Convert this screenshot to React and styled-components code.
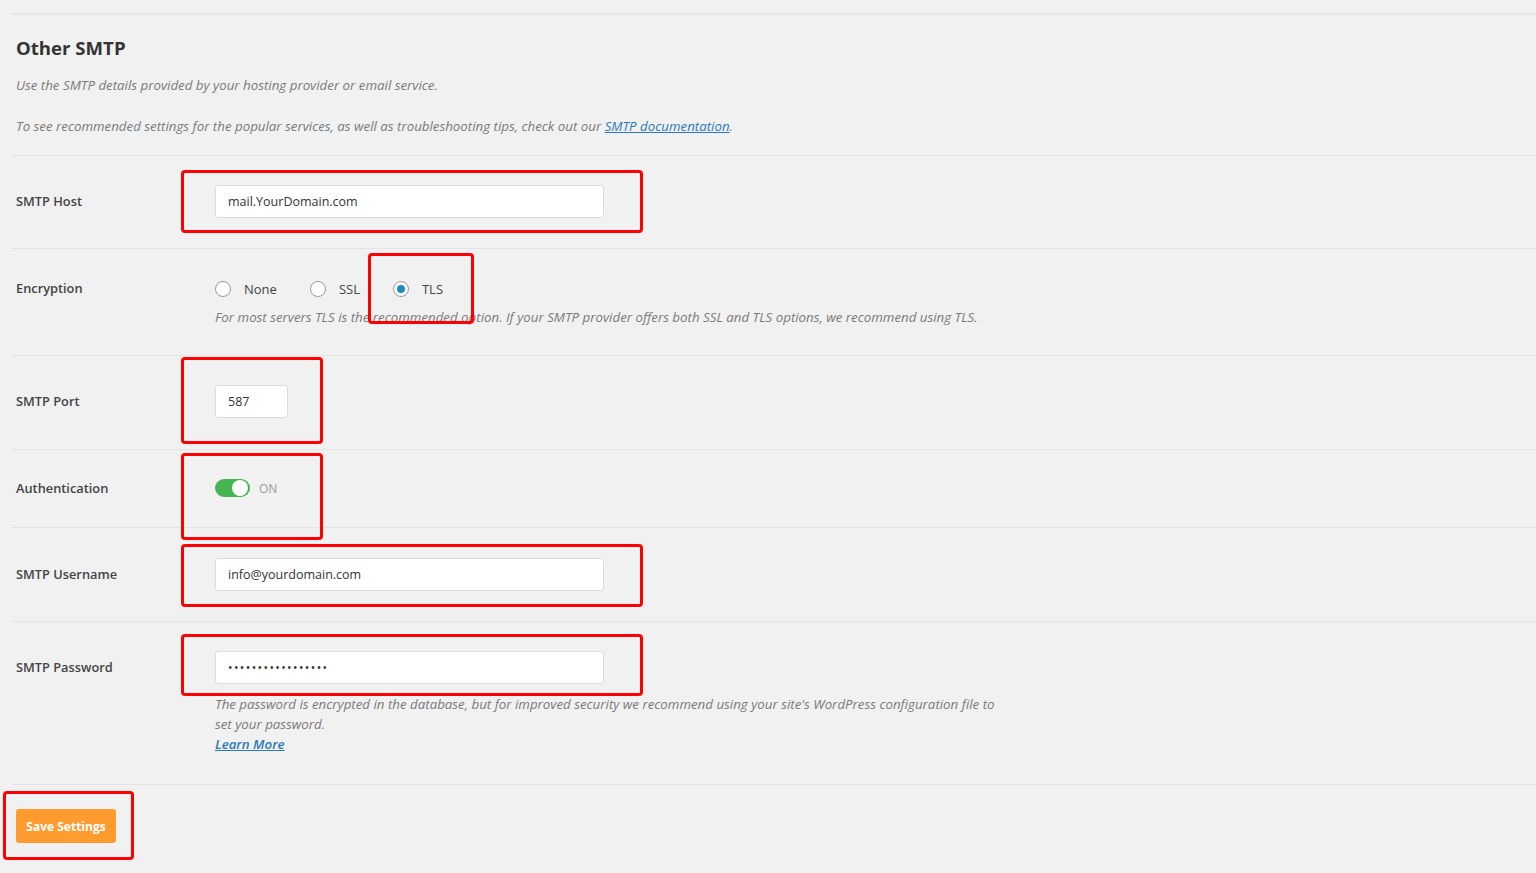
import React from "react";
import styled, { createGlobalStyle } from "styled-components";

const Global = createGlobalStyle`
  html, body { margin: 0; padding: 0; background: #f1f1f1; }
  body { font-family: "Open Sans", "Noto Sans", sans-serif; color: #444; }
  * { box-sizing: border-box; }
`;

const Page = styled.div`
  padding: 13px 0 0 12px;
  min-height: 873px;
`;

const Section = styled.section`
  border-top: 2px solid #e6e6e6;
`;

const Header = styled.div`
  padding: 21px 0 19px 4px;
  border-bottom: 1px solid #e3e3e3;
`;

const Title = styled.h2`
  margin: 0;
  font-size: 18.6px;
  line-height: 24px;
  font-weight: 700;
  color: #333;
`;

const Desc = styled.p`
  margin: ${(p) => p.$mt || 0}px 0 0;
  font-size: 13.3px;
  line-height: 20px;
  font-style: italic;
  color: #7a7a7a;
`;

const DocLink = styled.a`
  color: #2a7ab8;
  text-decoration: underline;
  font-weight: ${(p) => (p.$strong ? 600 : 400)};
`;

const Row = styled.div`
  display: grid;
  grid-template-columns: 203px 1fr;
  padding: ${(p) => p.$pt ?? 29}px 0 ${(p) => p.$pb ?? 30}px;
  border-bottom: 1px solid #e3e3e3;
`;

const Label = styled.div`
  padding-left: 4px;
  font-size: 12.8px;
  font-weight: 600;
  color: #444;
  line-height: ${(p) => p.$h}px;
`;

const Field = styled.div`
  position: relative;
`;

const TextInput = styled.input`
  display: block;
  width: ${(p) => p.$w}px;
  height: 33px;
  padding: 0 12px;
  border: 1px solid #dcdcdc;
  border-radius: 3px;
  background: #fff;
  font-family: "Open Sans", "Noto Sans", sans-serif;
  font-size: 12.5px;
  color: #333;
  outline: none;
  &[type="password"] {
    font-size: 12px;
    letter-spacing: 1.4px;
  }
`;

const RadioGroup = styled.div`
  display: flex;
  align-items: center;
  height: 22px;
`;

const RadioItem = styled.label`
  display: flex;
  align-items: center;
  gap: 13px;
  margin-right: 33px;
  font-size: 13px;
  color: #444;
`;

const RadioCircle = styled.span`
  width: 16px;
  height: 16px;
  border-radius: 50%;
  border: 1px solid #9a9a9a;
  background: #fff;
  display: flex;
  align-items: center;
  justify-content: center;
  &::after {
    content: "";
    width: 8px;
    height: 8px;
    border-radius: 50%;
    background: ${(p) => (p.$checked ? "#1e8cbe" : "transparent")};
  }
`;

const ToggleWrap = styled.div`
  display: flex;
  align-items: center;
  gap: 9px;
  height: 18px;
`;

const Track = styled.span`
  width: 35px;
  height: 18px;
  border-radius: 9px;
  background: #46b450;
  position: relative;
  &::after {
    content: "";
    position: absolute;
    top: 1px;
    right: 2px;
    width: 16px;
    height: 16px;
    border-radius: 50%;
    background: #fff;
  }
`;

const ToggleText = styled.span`
  font-size: 12px;
  color: #9a9a9a;
`;

const Footer = styled.div`
  padding: 24px 0 0 4px;
`;

const SaveButton = styled.button`
  position: relative;
  width: 100px;
  height: 34px;
  border: none;
  border-radius: 3px;
  background: #ff9b2f;
  color: #fff;
  font-family: "Open Sans", "Noto Sans", sans-serif;
  font-size: 12px;
  font-weight: 700;
  cursor: pointer;
`;

const Mark = styled.span`
  position: absolute;
  top: ${(p) => p.$top}px;
  left: ${(p) => p.$left}px;
  width: ${(p) => p.$w}px;
  height: ${(p) => p.$h}px;
  border: 3.5px solid #ff0000;
  border-radius: 4px;
  pointer-events: none;
`;

const FooterInner = styled.div`
  position: relative;
  display: inline-block;
`;

export default function App() {
  return (
    <Page>
      <Global />
      <Section>
        <Header>
          <Title>Other SMTP</Title>
          <Desc $mt={15}>Use the SMTP details provided by your hosting provider or email service.</Desc>
          <Desc $mt={21}>
            To see recommended settings for the popular services, as well as troubleshooting tips, check out our{" "}
            <DocLink href="#">SMTP documentation</DocLink>.
          </Desc>
        </Header>

        <Row>
          <Label $h={33}>SMTP Host</Label>
          <Field>
            <TextInput $w={389} readOnly value="mail.YourDomain.com" />
            <Mark $top={-15} $left={-34} $w={462} $h={63} />
          </Field>
        </Row>

        <Row $pb={28}>
          <Label $h={20}>Encryption</Label>
          <Field>
            <RadioGroup>
              <RadioItem><RadioCircle />None</RadioItem>
              <RadioItem><RadioCircle />SSL</RadioItem>
              <RadioItem><RadioCircle $checked />TLS</RadioItem>
            </RadioGroup>
            <Desc $mt={7}>
              For most servers TLS is the recommended option. If your SMTP provider offers both SSL and TLS options, we recommend using TLS.
            </Desc>
            <Mark $top={-25} $left={153} $w={106} $h={71} />
          </Field>
        </Row>

        <Row $pb={31}>
          <Label $h={33}>SMTP Port</Label>
          <Field>
            <TextInput $w={73} readOnly value="587" />
            <Mark $top={-28} $left={-34} $w={142} $h={87} />
          </Field>
        </Row>

        <Row>
          <Label $h={18}>Authentication</Label>
          <Field>
            <ToggleWrap>
              <Track />
              <ToggleText>ON</ToggleText>
            </ToggleWrap>
            <Mark $top={-26} $left={-34} $w={142} $h={87} />
          </Field>
        </Row>

        <Row $pt={30}>
          <Label $h={33}>SMTP Username</Label>
          <Field>
            <TextInput $w={389} readOnly value="info@yourdomain.com" />
            <Mark $top={-14} $left={-34} $w={462} $h={63} />
          </Field>
        </Row>

        <Row>
          <Label $h={33}>SMTP Password</Label>
          <Field>
            <TextInput $w={389} type="password" readOnly value="passwordpassword1" />
            <Desc $mt={10}>
              The password is encrypted in the database, but for improved security we recommend using your site's WordPress configuration file to
              <br />
              set your password.
            </Desc>
            <Desc>
              <DocLink href="#" $strong>Learn More</DocLink>
            </Desc>
            <Mark $top={-17} $left={-34} $w={462} $h={62} />
          </Field>
        </Row>

        <Footer>
          <FooterInner>
            <SaveButton>Save Settings</SaveButton>
            <Mark $top={-18} $left={-13} $w={131} $h={69} />
          </FooterInner>
        </Footer>
      </Section>
    </Page>
  );
}
